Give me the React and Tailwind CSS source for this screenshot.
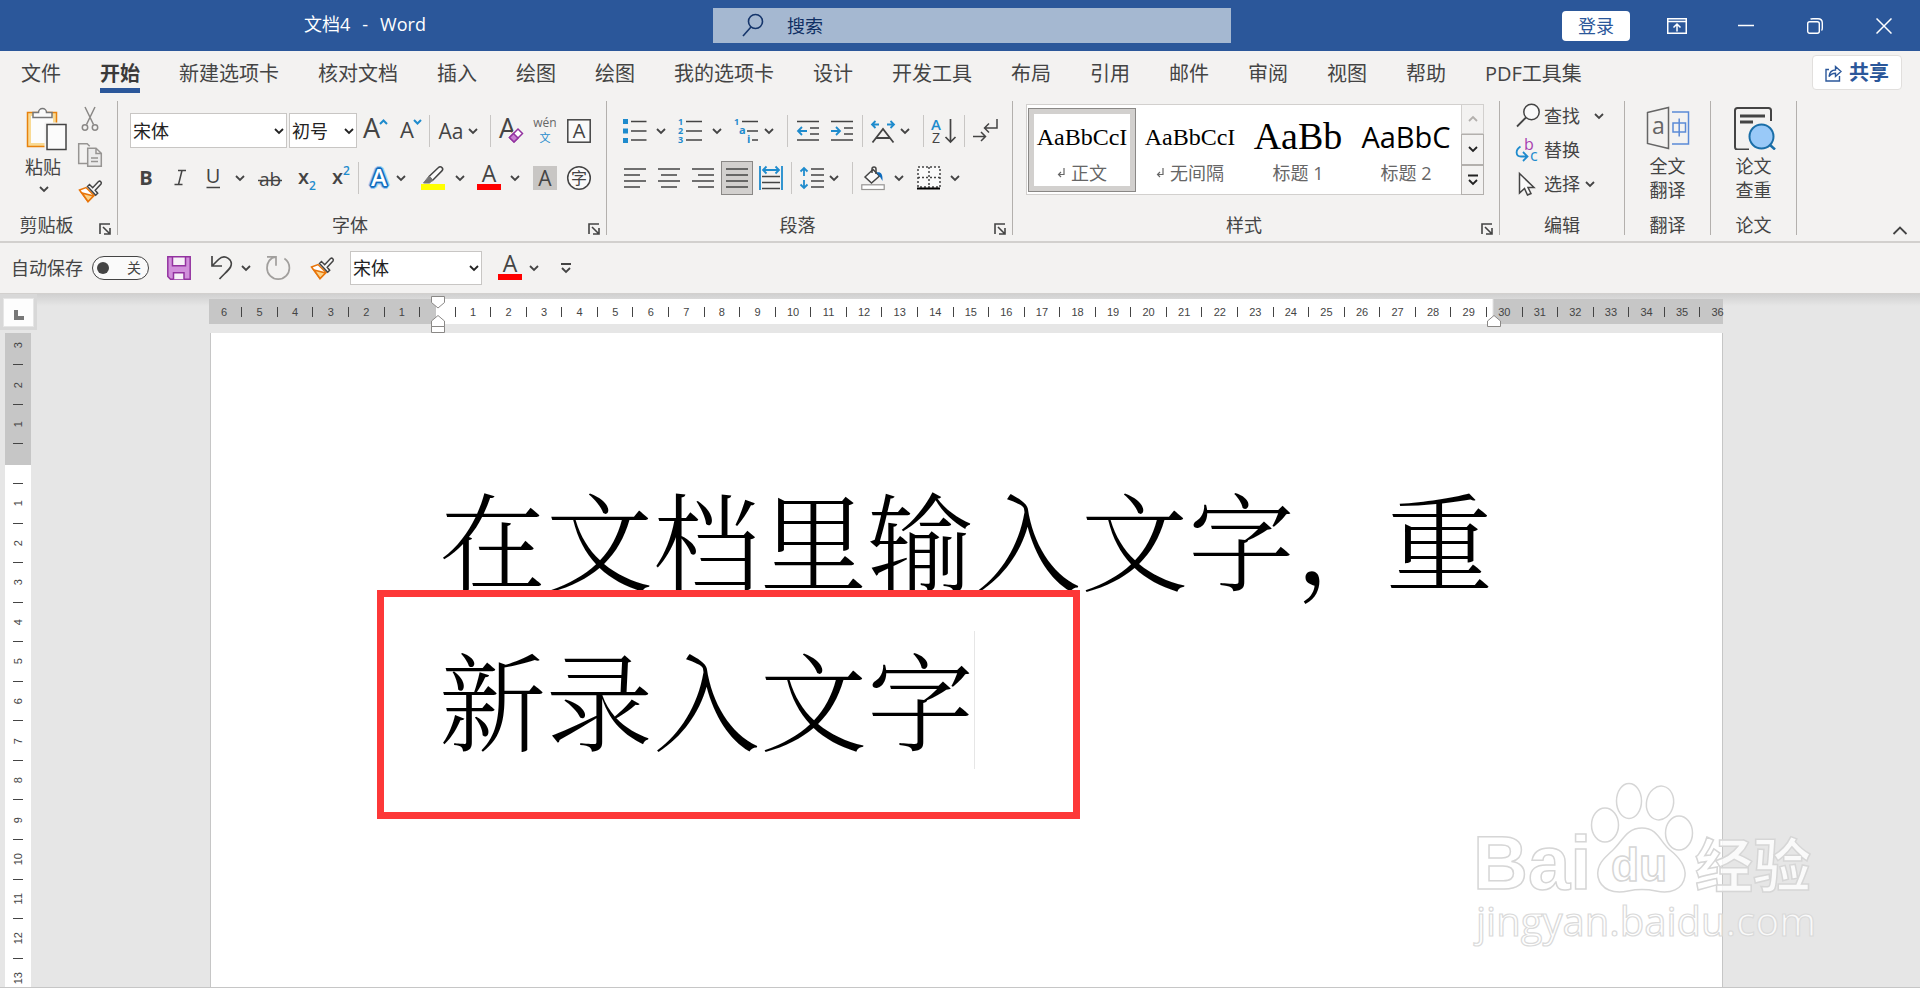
import React from "react";

const INK = "#444444";
const BLUE = "#1e8bcd";

function Icon({ label, className = "", size = 24, children }) {
  return (
    <button type="button" aria-label={label} className={"flex shrink-0 items-center justify-center " + className}>
      <svg width={size} height={size} viewBox={`0 0 ${size} ${size}`} fill="none" stroke={INK} strokeWidth="1.5" className="overflow-visible">
        {children}
      </svg>
    </button>
  );
}

function Chevron({ label = "更多选项", className = "", stroke = INK }) {
  return (
    <button type="button" aria-label={label} className={"shrink-0 " + className}>
      <svg width="12" height="12" viewBox="0 0 12 12" fill="none" stroke={stroke} strokeWidth="1.8">
        <path d="M2 4l4 4 4-4" />
      </svg>
    </button>
  );
}

function Letter({ children, x, y, size, fill = INK, weight = 400, ...rest }) {
  return (
    <text x={x} y={y} fontSize={size} fill={fill} stroke="none" fontWeight={weight} {...rest}>
      {children}
    </text>
  );
}

function Separator({ className }) {
  return <span className={"h-8 w-px shrink-0 bg-[#c8c6c4] " + className} />;
}

function Combo({ label, value, className }) {
  return (
    <div className={"relative shrink-0 " + className}>
      <select
        aria-label={label}
        defaultValue={value}
        className="h-full w-full appearance-none rounded-none border border-[#c8c6c4] bg-white pl-0.5 text-[18px] leading-6 text-[#222]"
      >
        <option>{value}</option>
      </select>
      <svg width="12" height="12" viewBox="0 0 12 12" fill="none" stroke="#222" strokeWidth="1.8" className="pointer-events-none absolute right-0.5 top-1/2 -translate-y-1/2">
        <path d="M2 4l4 4 4-4" />
      </svg>
    </div>
  );
}

function Group({ name, className, launcher = true, children }) {
  return (
    <section aria-label={name} className={"flex h-[134px] shrink-0 flex-col border-r border-[#b3b0ad] " + className}>
      <div className="flex-1">{children}</div>
      <div className="relative flex h-5 items-center justify-center text-[18px] leading-5">
        <span className={launcher ? "pr-6" : ""}>{name}</span>
        {launcher && (
          <button type="button" aria-label={name + "设置"} className="absolute right-1.5 bottom-0">
            <svg width="12" height="12" viewBox="0 0 12 12" fill="none" stroke={INK} strokeWidth="1.6">
              <path d="M1 11V1h10M4 4l7 7M11 5v6H5" />
            </svg>
          </button>
        )}
      </div>
    </section>
  );
}

function Brush() {
  return (
    <>
      <path d="M1.500 11L8 8.500l8 8L10 22.500z" fill="#fff" stroke="#e8750a" />
      <path d="M4 14l11.500 3L10 22.500z" fill="#fbd38a" stroke="#e8750a" />
      <path d="M9.500 7.500l2-2 3.200 3.200L20.500 2.500a1.800 1.800 0 0 1 2.500 2.500l-5.800 6.200 2.500 3-2 2z" fill="#f8f8f8" />
    </>
  );
}

function FontColor() {
  return (
    <>
      <Letter x="12" y="16" size="23" textAnchor="middle">A</Letter>
      <rect x="0" y="18" width="24" height="6" fill="#ff0000" stroke="none" />
    </>
  );
}

const tabs = ["文件", "开始", "新建选项卡", "核对文档", "插入", "绘图", "绘图", "我的选项卡", "设计", "开发工具", "布局", "引用", "邮件", "审阅", "视图", "帮助", "PDF工具集"];

function TitleBar() {
  return (
    <header className="flex h-[51px] bg-[#2b579a] text-white">
      <div className="flex min-w-0 flex-[713]">
        <h1 className="flex items-center gap-3 pb-1 pl-[304px] text-[18px] leading-6">
          <span>文档4</span>
          <span>-</span>
          <span>Word</span>
        </h1>
      </div>
      <div className="flex min-w-0 flex-[518] items-center">
        <label className="flex h-[35px] w-full items-center bg-[#a5b8d1] pl-[29px]">
          <svg width="22" height="28" viewBox="0 0 22 28" fill="none" stroke="#15356b" strokeWidth="1.600" className="shrink-0">
            <circle cx="13.500" cy="9.500" r="7" />
            <path d="M9 15L1 24" />
          </svg>
          <input aria-label="搜索" placeholder="搜索" className="ml-[23px] w-full bg-transparent text-[18px] leading-6 outline-none placeholder:text-[#0f2f63]" />
        </label>
      </div>
      <div className="flex min-w-0 flex-[689] items-center justify-end">
        <button type="button" className="mr-3 h-[30px] w-[68px] rounded-sm bg-white text-[18px] leading-6 text-[#2b579a]">登录</button>
        <div className="flex pr-0.5">
          <button type="button" aria-label="功能区显示选项" className="flex w-[69px] justify-center">
            <svg width="20" height="16" viewBox="0 0 20 16" fill="none" stroke="#fff" strokeWidth="1.500">
              <path d="M.75.75h18.500v14.500H.75zM.75 3.500h18.500M10 13.500V6.500M6.500 9.500L10 6l3.500 3.500" />
            </svg>
          </button>
          <button type="button" aria-label="最小化" className="flex w-[69px] justify-center">
            <svg width="16" height="16" viewBox="0 0 16 16" stroke="#fff" strokeWidth="1.500"><path d="M0 7.500h16" /></svg>
          </button>
          <button type="button" aria-label="还原" className="flex w-[69px] justify-center">
            <svg width="16" height="16" viewBox="0 0 16 16" fill="none" stroke="#fff" strokeWidth="1.400">
              <rect x=".7" y="3.700" width="11.600" height="11.600" rx="2" />
              <path d="M3.500 1.200Q4 .7 6 .7h5q4.300 0 4.300 4.300v5q0 2-.8 2.500" />
            </svg>
          </button>
          <button type="button" aria-label="关闭" className="flex w-[69px] justify-center">
            <svg width="16" height="16" viewBox="0 0 16 16" stroke="#fff" strokeWidth="1.500"><path d="M.5.5l15 15M15.500.5l-15 15" /></svg>
          </button>
        </div>
      </div>
    </header>
  );
}

function TabBar() {
  return (
    <nav className="flex h-[50px] items-start pl-[21px] pr-[18px]">
      <ul className="flex flex-1 gap-[39px] text-[20px] leading-6">
        {tabs.map((t, i) => (
          <li key={i}>
            <a
              href="#tab"
              className={
                i === 1
                  ? "block border-b-[5px] border-[#2b579a] pt-[11px] pb-0.5 font-bold text-[#3b3a39]"
                  : "block border-b-[5px] border-transparent pt-[11px] pb-0.5"
              }
            >
              {t}
            </a>
          </li>
        ))}
      </ul>
      <button type="button" className="mt-1 flex h-[35px] w-[90px] items-center justify-center gap-[7px] rounded border border-[#e1dfdd] bg-white text-[20px] leading-6 font-bold text-[#2b579a]">
        <svg width="17" height="18" viewBox="0 0 17 18" fill="none" stroke="#2b579a" strokeWidth="1.400">
          <path d="M4 5.500H1v11.500h13.500V12" />
          <path d="M4 12.500c.5-4 2.500-6.500 6.500-6.500V2.500L16 7.500l-5.500 5V9.200c-3 0-5 1-6.500 3.300z" />
        </svg>
        共享
      </button>
    </nav>
  );
}

function Clipboard() {
  return (
    <Group name="剪贴板" className="w-[118px]">
      <div className="flex pl-[22px] pt-1">
        <button type="button" className="flex w-11 flex-col items-center text-[18px] leading-6">
          <svg width="44" height="48" viewBox="0 0 44 48" fill="none" stroke={INK} strokeWidth="1.500" className="overflow-visible">
            <path d="M5.500 7.500h29v34h-29z" fill="#f9da94" stroke="#e8820c" />
            <path d="M9 11h22v27H9z" fill="#fcfcfc" stroke="none" />
            <path d="M11 12.500V7.500h5.500a4 4 0 0 1 8 0H30v5z" fill="#fafafa" stroke="#777" />
            <rect x="22.500" y="17.500" width="23" height="29" fill="#f3f2f1" stroke="none" />
            <rect x="25" y="19.500" width="19" height="25" fill="#fbfbfb" />
          </svg>
          <span className="pr-0.5 pt-0.5">粘贴</span>
          <svg width="12" height="12" viewBox="0 0 12 12" fill="none" stroke={INK} strokeWidth="1.800" className="mt-1"><path d="M2 4l4 4 4-4" /></svg>
        </button>
        <div className="flex flex-col gap-3 pl-3 pt-0.5">
          <Icon label="剪切">
            <g stroke="#8a8886">
              <path d="M7 0l8.500 17.500M17 0L8.500 17.500" />
              <circle cx="7" cy="20.500" r="2.700" />
              <circle cx="17" cy="20.500" r="2.700" />
            </g>
          </Icon>
          <Icon label="复制">
            <g stroke="#979593">
              <path d="M9 20.500H.7V.7h8.500l2.500 2.500" />
              <path d="M9.700 5.200h8.300l5.300 5V23.300H9.700zM18 5.200v5.300h5.300M13 15h7M13 18.500h7" fill="#ebebeb" />
            </g>
          </Icon>
          <Icon label="格式刷"><Brush /></Icon>
        </div>
      </div>
    </Group>
  );
}

function FontGroup() {
  return (
    <Group name="字体" className="w-[489px]">
      <div className="mt-3 flex h-[35px] items-center pl-3">
        <Combo label="字体" value="宋体" className="h-[35px] w-[157px]" />
        <Combo label="字号" value="初号" className="ml-0.5 h-[35px] w-[68px]" />
        <Icon label="增大字号" className="ml-[7px]">
          <Letter x="-1" y="19" size="27">A</Letter>
          <path d="M16 5l3.500-3.500L23 5" stroke={BLUE} strokeWidth="2" />
        </Icon>
        <Icon label="减小字号" className="ml-3">
          <Letter x="0" y="19" size="22">A</Letter>
          <path d="M14 1l3.500 3.500L21 1" stroke={BLUE} strokeWidth="2" />
        </Icon>
        <Separator className="ml-[5px]" />
        <button type="button" aria-label="更改大小写" className="ml-2 w-[26px] text-[21px] leading-6">Aa</button>
        <Chevron className="ml-[3px]" />
        <Separator className="ml-[11px]" />
        <Icon label="清除格式" className="ml-2">
          <Letter x="0" y="19" size="27">A</Letter>
          <path d="M9.500 19l9-9 5 5-9 9z" fill="#f3f2f1" stroke="#f3f2f1" strokeWidth="3" />
          <path d="M10.500 18.500l8.500-8.500 4.500 4.500-8.500 8.500z" fill="#fff" stroke="#9333a0" />
          <path d="M10.500 18.500l4-4 4.500 4.500-4 4z" fill="#c77fd0" stroke="#9333a0" />
        </Icon>
        <Icon label="拼音指南" className="ml-2.5">
          <Letter x="12" y="8" size="12" fill="#666" textAnchor="middle">wén</Letter>
          <Letter x="12" y="23" size="11" fill={BLUE} textAnchor="middle">文</Letter>
        </Icon>
        <Icon label="字符边框" className="ml-2.5">
          <rect x=".8" y=".8" width="22.400" height="22.400" fill="#fafafa" />
          <Letter x="12" y="19" size="20" textAnchor="middle">A</Letter>
        </Icon>
      </div>
      <div className="mt-3 flex h-[35px] items-center pl-4">
        <button type="button" aria-label="加粗" className="w-6 text-[20px] leading-6 font-bold">B</button>
        <Icon label="倾斜" className="ml-2.5">
          <path d="M10 4.500h8M6.500 18.500h8M14 4.500L10.500 18.500" />
        </Icon>
        <Icon label="下划线" className="ml-[9px]">
          <Letter x="12" y="17" size="20" textAnchor="middle">U</Letter>
          <path d="M5.500 21.500h13.500" />
        </Icon>
        <Chevron className="ml-[9px]" />
        <Icon label="删除线" className="ml-3">
          <Letter x="12" y="20" size="19" textAnchor="middle">ab</Letter>
          <path d="M0 14.500h24" />
        </Icon>
        <Icon label="下标" className="ml-[13px]">
          <Letter x="3" y="18" size="20" weight="600">x</Letter>
          <Letter x="14" y="24" size="12" fill={BLUE} weight="600">2</Letter>
        </Icon>
        <Icon label="上标" className="ml-2.5">
          <Letter x="3" y="18" size="20" weight="600">x</Letter>
          <Letter x="14" y="9" size="12" fill={BLUE} weight="600">2</Letter>
        </Icon>
        <Separator className="ml-[5px]" />
        <Icon label="文本效果" className="ml-2">
          <text x="12" y="20" fontSize="24" fontWeight="600" textAnchor="middle" fill="none" stroke="#9ccbf2" strokeWidth="6" strokeLinejoin="bevel">A</text>
          <text x="12" y="20" fontSize="24" fontWeight="600" textAnchor="middle" fill="#fff" stroke="#0f6cbd" strokeWidth="3.500" strokeLinejoin="bevel" paintOrder="stroke">A</text>
        </Icon>
        <Chevron className="ml-1" />
        <Icon label="文本突出显示颜色" className="ml-3.5">
          <path d="M8 10.500L17.500 1.500a2.300 2.300 0 0 1 3.400 3.400L11.500 14.500z" fill="#fafafa" />
          <path d="M8 10l4 4-3.500 3H2.500z" fill="#777" stroke="#777" strokeWidth="1" />
          <rect x="0" y="18" width="24" height="6" fill="#ffff00" stroke="none" />
        </Icon>
        <Chevron className="ml-[9px]" />
        <Icon label="字体颜色" className="ml-[11px]"><FontColor /></Icon>
        <Chevron className="ml-2" />
        <Icon label="字符底纹" className="ml-3">
          <rect width="24" height="24" fill="#c8c6c4" stroke="none" />
          <Letter x="12" y="20" size="21" textAnchor="middle">A</Letter>
        </Icon>
        <Icon label="带圈字符" className="ml-2.5">
          <circle cx="12" cy="12" r="11.300" fill="#fafafa" />
          <Letter x="12" y="18" size="16" textAnchor="middle">字</Letter>
        </Icon>
      </div>
    </Group>
  );
}

function ParagraphGroup() {
  return (
    <Group name="段落" className="w-[406px]">
      <div className="mt-3 flex h-[35px] items-center pl-4">
        <Icon label="项目符号">
          <path d="M0 0h5v5H0zM0 9.500h5v5H0zM0 19h5v5H0z" fill={BLUE} stroke="none" />
          <path d="M8 2.500h15.500M8 12h15.500M8 21h15.500" />
        </Icon>
        <Chevron className="ml-2" />
        <Icon label="编号" className="ml-[11px]">
          <Letter x="0" y="6" size="9" fill={BLUE} weight="700">1</Letter>
          <Letter x="0" y="15" size="9" fill={BLUE} weight="700">2</Letter>
          <Letter x="0" y="24" size="9" fill={BLUE} weight="700">3</Letter>
          <path d="M8 2.500h16M8 12h16M8 21h16" />
        </Icon>
        <Chevron className="ml-[9px]" />
        <Icon label="多级列表" className="ml-[11px]">
          <Letter x="0" y="6" size="9" fill={BLUE} weight="700">1</Letter>
          <Letter x="5" y="15" size="11" fill={BLUE} weight="700">a</Letter>
          <Letter x="13" y="24" size="11" fill={BLUE} weight="700">i</Letter>
          <path d="M8 2.500h16M13 12h11M18 21h6" />
        </Icon>
        <Chevron className="ml-[5px]" />
        <Separator className="ml-3" />
        <Icon label="减少缩进量" className="ml-2">
          <path d="M1 2.500h22M14 9h9M14 15h9M1 21h22" />
          <path d="M11 12H2M6 8l-4 4 4 4" stroke={BLUE} strokeWidth="1.800" />
        </Icon>
        <Icon label="增加缩进量" className="ml-2.5">
          <path d="M1 2.500h22M14 9h9M14 15h9M1 21h22" />
          <path d="M1 12h9M6 8l4 4-4 4" stroke={BLUE} strokeWidth="1.800" />
        </Icon>
        <Separator className="ml-2" />
        <Icon label="中文版式" className="ml-2">
          <path d="M1.500 23.500L12 10l10.500 13.500M5 19h14" strokeWidth="1.800" />
          <path d="M8 5.500H1M4.500 2L1 5.500 4.500 9M16 5.500h7M19.500 2L23 5.500 19.500 9" stroke={BLUE} strokeWidth="1.800" />
        </Icon>
        <Chevron className="ml-1" />
        <Separator className="ml-3" />
        <Icon label="排序" className="ml-[7px]">
          <Letter x="0" y="11" size="15" fill={BLUE} weight="600">A</Letter>
          <Letter x="1" y="24" size="14">Z</Letter>
          <path d="M19.500 0v23M14.500 18l5 5 5-5" strokeWidth="1.700" />
        </Icon>
        <Separator className="ml-[9px]" />
        <Icon label="显示编辑标记" className="ml-2">
          <path d="M24 0v9H12M16 4.500L11.500 9l4.500 4.500" />
          <path d="M0 17.500h12M8 13l4.500 4.500L8 22" />
        </Icon>
      </div>
      <div className="mt-3 flex h-[35px] items-center pl-4">
        <Icon label="左对齐"><path d="M1 3h22M1 9h16M1 15h22M1 21h16" /></Icon>
        <Icon label="居中" className="ml-2.5"><path d="M1 3h22M4 9h16M1 15h22M4 21h16" /></Icon>
        <Icon label="右对齐" className="ml-2.5"><path d="M1 3h22M7 9h16M1 15h22M7 21h16" /></Icon>
        <Icon label="两端对齐" className="ml-1.5 h-[34px] w-8 border border-[#8a8886] bg-[#d2d0ce]"><path d="M1 3h22M1 9h22M1 15h22M1 21h22" /></Icon>
        <Icon label="分散对齐" className="ml-1.5">
          <path d="M1 0v24M23 0v24M4 4h16M7.500.5L4 4l3.500 3.500M16.500.5L20 4l-3.500 3.500" stroke={BLUE} strokeWidth="1.800" />
          <path d="M3 10.500h18M3 16.500h18M3 22.500h18" />
        </Icon>
        <Separator className="ml-2" />
        <Icon label="行距" className="ml-2">
          <path d="M4 2v8M.5 5.500L4 2l3.500 3.500M4 14v8M.5 18.500L4 22l3.500-3.500" stroke={BLUE} strokeWidth="1.800" />
          <path d="M11 3h13M11 9h13M11 15h13M11 21h13" />
        </Icon>
        <Chevron className="ml-1" />
        <Separator className="ml-3" />
        <Icon label="底纹" className="ml-2">
          <path d="M4 11l8-7.500 6.500 6.500-8 7z" fill="#fafafa" />
          <path d="M11 7V3a2 2 0 0 1 4 0v5" />
          <path d="M15.500 6.500c4-1 6.500 1 6 8.500l-3-5z" fill="#0f6cbd" stroke="none" />
          <rect x=".8" y="18.800" width="22.400" height="4.700" fill="#fff" stroke="#979593" strokeWidth="1.200" />
        </Icon>
        <Chevron className="ml-2" />
        <Icon label="边框" className="ml-3">
          <path d="M1 1h22v20H1z" fill="#fafafa" strokeDasharray="2 2" />
          <path d="M12 1v20M1 11.500h22" strokeDasharray="2 2" />
          <path d="M0 22.500h23" stroke="#000" strokeWidth="2" />
        </Icon>
        <Chevron className="ml-2" />
      </div>
    </Group>
  );
}

function ReturnMark() {
  return (
    <svg width="8" height="10" viewBox="0 0 8 10" fill="none" stroke="#666" strokeWidth="1.200">
      <path d="M7 0v6.500H1.500M4 4L1.500 6.500 4 9" />
    </svg>
  );
}

const styles = [
  { name: "正文", sample: "AaBbCcI", mark: true, face: "font-['Liberation_Serif',serif] text-[24px]" },
  { name: "无间隔", sample: "AaBbCcI", mark: true, face: "font-['Liberation_Serif',serif] text-[24px]" },
  { name: "标题 1", sample: "AaBb", face: "font-['Liberation_Serif',serif] text-[38px]" },
  { name: "标题 2", sample: "AaBbC", face: "text-[29px]" },
];

function StylesGroup() {
  return (
    <Group name="样式" className="w-[487px]">
      <div className="ml-[13px] mr-[15px] mt-[3px] flex h-[91px] border border-[#d2d0ce] bg-white">
        <div className="flex flex-1 items-center pl-px">
          {styles.map((s, i) => (
            <button
              type="button"
              key={s.name}
              className={
                "flex h-[84px] w-[108px] shrink-0 flex-col items-center " +
                (i === 0 ? "border border-[#8a8886] ring-[5px] ring-inset ring-[#d2d0ce]" : "border border-transparent")
              }
            >
              <span className={"flex h-[52px] items-center justify-center pt-1 whitespace-nowrap text-black " + s.face}>{s.sample}</span>
              <span className="flex items-center gap-1.5 text-[18px] leading-6 text-[#666]">
                {s.mark && <ReturnMark />}
                {s.name}
              </span>
            </button>
          ))}
        </div>
        <div className="-my-px -mr-px flex w-[23px] flex-col bg-[#f3f2f1]">
          <button type="button" aria-label="向上滚动" className="flex flex-1 items-center justify-center border border-[#d2d0ce]">
            <svg width="12" height="12" viewBox="0 0 12 12" fill="none" stroke="#b3b0ad" strokeWidth="1.800"><path d="M2 8l4-4 4 4" /></svg>
          </button>
          <button type="button" aria-label="向下滚动" className="flex flex-1 items-center justify-center border border-[#b3b0ad]">
            <svg width="12" height="12" viewBox="0 0 12 12" fill="none" stroke="#222" strokeWidth="1.800"><path d="M2 4l4 4 4-4" /></svg>
          </button>
          <button type="button" aria-label="其他样式" className="flex flex-1 items-center justify-center border border-[#b3b0ad]">
            <svg width="12" height="12" viewBox="0 0 12 12" fill="none" stroke="#222" strokeWidth="1.800"><path d="M1 1.500h10M2 6l4 4 4-4" /></svg>
          </button>
        </div>
      </div>
    </Group>
  );
}

function EditGroup() {
  return (
    <Group name="编辑" launcher={false} className="w-[125px]">
      <div className="flex flex-col gap-2.5 pl-4 pt-[3px] text-[18px] leading-6">
        <div className="flex h-6 items-center">
          <Icon label="查找">
            <circle cx="15.500" cy="8" r="7.700" fill="#fafafa" />
            <path d="M10 13.500L1 22.500" strokeWidth="1.800" />
          </Icon>
          <button type="button" className="ml-1">查找</button>
          <Chevron className="ml-[13px]" />
        </div>
        <div className="flex h-6 items-center">
          <Icon label="替换">
            <Letter x="8" y="12" size="16" fill="#a83fb0">b</Letter>
            <Letter x="14" y="23" size="16" fill={BLUE}>c</Letter>
            <path d="M4.500 8.500C-1 12-.5 18.500 5 18.500h6M7 14l4.500 4.500L7 23" stroke={BLUE} strokeWidth="1.800" />
          </Icon>
          <button type="button" className="ml-1">替换</button>
        </div>
        <div className="flex h-6 items-center">
          <Icon label="选择对象">
            <path d="M3.500 1.500v19.500l5-4.500 3 6.500 3.500-1.500-3-6h6z" fill="#fafafa" />
          </Icon>
          <button type="button" className="ml-1">选择</button>
          <Chevron className="ml-1" />
        </div>
      </div>
    </Group>
  );
}

function LargeButton({ lines, children }) {
  return (
    <button type="button" className="flex w-full flex-col items-center pt-[5px] text-[18px] leading-6">
      <svg width="44" height="44" viewBox="0 0 44 44" fill="none" stroke={INK} strokeWidth="1.500" className="mb-1">
        {children}
      </svg>
      {lines.map((l) => <span key={l}>{l}</span>)}
    </button>
  );
}

function Ribbon() {
  return (
    <div className="flex h-[142px] border-b-2 border-[#d2d0ce]">
      <Clipboard />
      <FontGroup />
      <ParagraphGroup />
      <StylesGroup />
      <EditGroup />
      <Group name="翻译" launcher={false} className="w-[86px]">
        <LargeButton lines={["全文", "翻译"]}>
          <path d="M1.500 6.500L22.500 1.500v41L1.500 37.500z" stroke="#666" />
          <Letter x="6" y="28" size="23" fill="#666">a</Letter>
          <path d="M26 6h16.500V38H26" stroke="#5b8ad6" />
          <path d="M27 17h12.500v9H27zM33.200 12.500v18" stroke="#5b8ad6" />
        </LargeButton>
      </Group>
      <Group name="论文" launcher={false} className="w-[86px]">
        <LargeButton lines={["论文", "查重"]}>
          <path d="M39 15V4.500Q39 2 36.500 2h-31Q3 2 3 4.500V41q0 2.500 2.500 2.500H17" strokeWidth="2" />
          <path d="M8 10h25M8 16h13" strokeWidth="3" />
          <circle cx="29.500" cy="30.500" r="12" fill="#99c9f8" stroke="#1a6ea8" strokeWidth="2" />
          <path d="M37.500 38.500l5.500 5" stroke="#1a6ea8" strokeWidth="2.500" />
        </LargeButton>
      </Group>
      <div className="flex flex-1 items-end justify-end pr-3 pb-1">
        <button type="button" aria-label="折叠功能区">
          <svg width="16" height="12" viewBox="0 0 16 12" fill="none" stroke={INK} strokeWidth="1.800"><path d="M1.500 9L8 2.500 14.500 9" /></svg>
        </button>
      </div>
    </div>
  );
}

function QuickAccess() {
  return (
    <div className="flex h-[51px] items-center border-b border-[#d2d0ce] pb-px pl-[11px]">
      <label htmlFor="autosave" className="w-[72px] text-[18px] leading-6">自动保存</label>
      <span className="relative ml-[9px] h-6 w-[57px]">
        <input id="autosave" type="checkbox" role="switch" className="block h-6 w-full appearance-none rounded-full border border-[#444] bg-[#fafafa]" />
        <span className="pointer-events-none absolute inset-0 flex items-center justify-between pl-[5px] pr-2 text-[14px] leading-none">
          <span className="size-3 rounded-full bg-[#444]" />关
        </span>
      </span>
      <Icon label="保存" className="ml-[18px]">
        <path d="M.8.8h22.400v22.400H3.500L.8 20.500z" fill="#d18fdb" stroke="#9333a0" />
        <path d="M5.500.8h13v9h-13zM6.500 23.200v-6.500h10.500v6.500" fill="#f6f0f7" stroke="#9333a0" />
      </Icon>
      <Icon label="撤消" className="ml-5">
        <path d="M1 0v10h10M1.500 9.500l6-6C14-2.500 23 4 19.500 11 18 14 13 18 8.500 23" strokeWidth="1.700" />
      </Icon>
      <Chevron className="ml-[5px]" />
      <Icon label="恢复" className="ml-3.5">
        <path d="M1 .8h9v9M10 1C4 1.500 1 6.500 1 12a11.200 11.200 0 0 0 22.400 0c0-4-2-7.500-5-9.500" stroke="#a19f9d" strokeWidth="1.700" />
      </Icon>
      <Icon label="格式刷" className="ml-5"><Brush /></Icon>
      <Combo label="快速字体" value="宋体" className="ml-4 h-[34px] w-[132px]" />
      <Icon label="快速字体颜色" className="ml-4"><FontColor /></Icon>
      <Chevron className="ml-1.5" />
      <Icon label="自定义快速访问工具栏" size={12} className="ml-5">
        <path d="M1 2h10M2 6l4 4 4-4" strokeWidth="1.800" />
      </Icon>
    </div>
  );
}

function marks(from, to) {
  const out = [];
  for (let n = from; n <= to; n++) {
    out.push(n === 0 ? "" : String(Math.abs(n)));
    if (n < to) out.push("|");
  }
  return out;
}

function HorizontalRuler() {
  return (
    <div className="relative h-[25px] bg-[linear-gradient(to_right,#c6c6c6_227px,#fff_227px,#fff_calc(100%-231px),#c6c6c6_calc(100%-229px))]">
      <div className="flex h-full items-center justify-between pl-[15px] pr-[5px] font-['Liberation_Sans',sans-serif] text-[11px] leading-4">
        {marks(-6, 36).map((m, i) => (
          <span key={i} className="flex w-0 justify-center">
            {m === "|" ? <span className="h-2.5 w-px shrink-0 bg-[#444]" /> : m}
          </span>
        ))}
      </div>
      <svg width="14" height="38" viewBox="0 0 14 38" fill="#fff" stroke="#8a8886" className="absolute -top-[3px] left-[222px]">
        <path d="M.5.5h13v6l-6.500 5.500L.5 6.500zM.5 30.500v-5.500L7 19.500l6.500 5.500v5.500zM.5 30.500h13v6H.5z" />
      </svg>
      <svg width="14" height="12" viewBox="0 0 14 12" fill="#fff" stroke="#8a8886" className="absolute right-[222px] top-4">
        <path d="M.5 11.500V6L7 .5 13.500 6v5.500z" />
      </svg>
    </div>
  );
}

function VerticalRuler() {
  return (
    <div className="ml-[5px] mt-[3px] flex w-[26px] flex-1 flex-col items-center justify-between bg-[linear-gradient(to_bottom,#c6c6c6_132px,#fff_132px)] pt-3 pb-[9px] font-['Liberation_Sans',sans-serif] text-[11px] leading-4">
      {marks(-3, 13).map((m, i) => (
        <span key={i} className="flex h-0 items-center justify-center">
          {m === "|" ? <span className="h-px w-2.5 bg-[#444]" /> : <span className="rotate-180 [writing-mode:vertical-rl]">{m}</span>}
        </span>
      ))}
    </div>
  );
}

function Watermark() {
  return (
    <svg role="img" aria-label="Baidu 经验" width="350" height="172" viewBox="0 0 350 172" className="absolute right-[100px] bottom-[35px] overflow-visible">
      <g fill="#fff" fillOpacity="0.800" stroke="#d6d6d6" strokeWidth="1.500" fontWeight="700" fontFamily="'Liberation Sans','Noto Sans CJK SC',sans-serif">
        <text x="3" y="109" fontSize="76">Bai</text>
        <ellipse cx="135" cy="45" rx="13.500" ry="17" />
        <ellipse cx="159" cy="21" rx="12.500" ry="17.500" />
        <ellipse cx="190" cy="23" rx="13.500" ry="17" transform="rotate(12 190 23)" />
        <ellipse cx="209" cy="53" rx="13.500" ry="17" />
        <path d="M172 48C188 48 190 62 200 70 210 78 216 86 215 96 213 110 200 114 186 111 176 109 168 109 158 111 144 114 131 110 128 97 126 85 134 78 143 70 152 62 156 48 172 48z" />
        <text x="141" y="101" fontSize="46">du</text>
        <text x="225" y="107" fontSize="58">经验</text>
      </g>
      <text x="6" y="156" fontSize="40" fill="#fff" fillOpacity="0.800" stroke="#dadada" strokeWidth="1.200">jingyan.baidu.com</text>
    </svg>
  );
}

function Workspace() {
  return (
    <main className="relative flex flex-1 border-b border-[#c6c6c6] bg-[linear-gradient(to_bottom,#d0d0d0,#e6e6e6_12px)]">
      <div className="flex w-[37px] flex-col">
        <div className="flex h-9 items-center justify-center bg-[#d8d8d8]">
          <button type="button" aria-label="制表符" className="flex h-[29px] w-[31px] items-center justify-center border border-[#e6e6e6] bg-[#fdfdfd] pt-1.5">
            <svg width="10" height="10" viewBox="0 0 10 10" fill="#777"><path d="M0 0h4v6h6v4H0z" /></svg>
          </button>
        </div>
        <VerticalRuler />
      </div>
      <div className="flex flex-1 flex-col pl-[172px] pr-[197px] pt-[5px]">
        <HorizontalRuler />
        <article className="relative mt-[9px] ml-px flex-1 border-x border-[#c6c6c6] bg-white pl-[228px] pt-[124px] font-['Noto_Serif_CJK_SC','Noto_Sans_CJK_SC',serif] text-[107px] leading-[160px] font-light whitespace-nowrap text-black">
          <p>在文档里输入文字<span className="-mr-4">，</span>重</p>
          <p className="flex items-center">新录入文字<span className="mb-2 h-[138px] w-px self-end bg-[#e6e6e6]" /></p>
          <div className="absolute left-[166px] top-[257px] h-[229px] w-[703px] border-[7px] border-[#fd3838]" />
        </article>
      </div>
      <Watermark />
    </main>
  );
}

export default function App() {
  return (
    <div className="flex min-h-screen flex-col bg-[#f3f2f1] font-['Open_Sans','Noto_Sans_CJK_SC',sans-serif] text-[#444]">
      <TitleBar />
      <TabBar />
      <Ribbon />
      <QuickAccess />
      <Workspace />
    </div>
  );
}
